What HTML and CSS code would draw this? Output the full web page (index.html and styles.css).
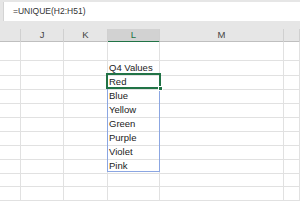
FILE: index.html
```html
<!DOCTYPE html>
<html lang="en">
<head>
  <meta charset="UTF-8">
  <title>UNIQUE spill</title>
  <link rel="stylesheet" href="styles.css">
</head>
<body>

  <div class="formula-bar">
    <div class="formula-box">=UNIQUE(H2:H51)</div>
  </div>

  <div class="sheet">
    <div class="headers">
      <div class="col-head"></div>
      <div class="col-head">J</div>
      <div class="col-head">K</div>
      <div class="col-head selected">L</div>
      <div class="col-head">M</div>
      <div class="col-head"></div>
    </div>

    <div class="grid">
      <div class="row first"><div></div><div></div><div></div><div></div><div></div><div></div></div>
      <div class="row"><div></div><div></div><div></div><div class="cell">Q4 Values</div><div></div><div></div></div>
      <div class="row"><div></div><div></div><div></div><div class="cell">Red</div><div></div><div></div></div>
      <div class="row"><div></div><div></div><div></div><div class="cell">Blue</div><div></div><div></div></div>
      <div class="row"><div></div><div></div><div></div><div class="cell">Yellow</div><div></div><div></div></div>
      <div class="row"><div></div><div></div><div></div><div class="cell">Green</div><div></div><div></div></div>
      <div class="row"><div></div><div></div><div></div><div class="cell">Purple</div><div></div><div></div></div>
      <div class="row"><div></div><div></div><div></div><div class="cell">Violet</div><div></div><div></div></div>
      <div class="row"><div></div><div></div><div></div><div class="cell">Pink</div><div></div><div></div></div>
      <div class="row"><div></div><div></div><div></div><div></div><div></div><div></div></div>
      <div class="row"><div></div><div></div><div></div><div></div><div></div><div></div></div>

      <!-- spill range + active cell -->
      <div class="spill"></div>
      <div class="active"><span class="handle"></span></div>
    </div>
  </div>

</body>
</html>
```

FILE: styles.css
```css
* {
  box-sizing: border-box;
}

body {
  margin: 0;
  width: 300px;
  height: 202px;
  overflow: hidden;
  background: #fff;
  font-family: 'Liberation Sans', Arial, sans-serif;
  color: #222;
}

.formula-bar {
  height: 22px;
  padding-top: 2px;
  background: #e6e6e6;
}

.formula-box {
  height: 19px;
  margin-left: 3px;
  padding-left: 9px;
  background: #fff;
  border-left: 1px solid #d4d4d4;
  font-size: 8.5px;
  line-height: 19px;
  color: #333;
}

.sheet {
  padding-top: 7px;
  background: #e6e6e6;
}

.headers,
.row {
  display: grid;
  grid-template-columns: 21px 43px 44px 52px 124px 1fr;
}

.headers {
  height: 13px;
  border-bottom: 1px solid #bfbfbf;
}

.col-head {
  border-right: 1px solid #d0d0d0;
  text-align: center;
  font-size: 9.5px;
  line-height: 12px;
  color: #444;
}

.col-head.selected {
  background: #d2d2d2;
  border-bottom: 2px solid #217346;
  color: #217346;
}

.grid {
  position: relative;
  background: #fff;
}

.row {
  height: 14px;
}

.row.first {
  height: 19px;
}

.row > div {
  border-right: 1px solid #e1e1e1;
  border-bottom: 1px solid #e1e1e1;
}

.cell {
  padding-left: 1px;
  font-size: 9.5px;
  line-height: 14px;
  white-space: nowrap;
}

.spill {
  position: absolute;
  left: 107px;
  top: 32px;
  width: 53px;
  height: 98px;
  border: 1px solid #8ba6e2;
}

.active {
  position: absolute;
  left: 106px;
  top: 31px;
  width: 55px;
  height: 16px;
  border: 2px solid #217346;
}

.handle {
  position: absolute;
  right: -4px;
  bottom: -4px;
  width: 5px;
  height: 5px;
  background: #217346;
  border: 1px solid #fff;
}
```
